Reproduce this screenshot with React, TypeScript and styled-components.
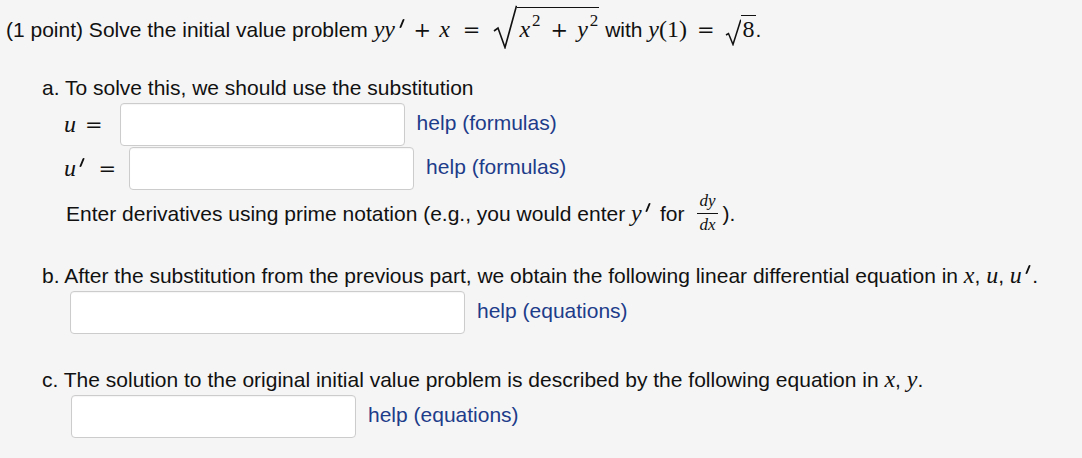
import React from "react";
import styled, { createGlobalStyle } from "styled-components";

const GlobalStyle = createGlobalStyle`
  html, body {
    margin: 0;
    background: #f5f5f5;
  }
  body {
    font-family: "Liberation Sans", Arial, sans-serif;
    font-size: 21px;
    color: #111;
  }
`;

const Page = styled.div`
  width: 1082px;
  height: 458px;
  overflow: hidden;
`;

const Title = styled.div`
  box-sizing: border-box;
  height: 60px;
  padding: 5px 0 0 6px;
  line-height: 30px;
  white-space: nowrap;
`;

const Part = styled.div<{ $top: number }>`
  margin-top: ${(p) => p.$top}px;
  padding-left: 42px;
`;

const Line = styled.div<{ $indent?: number; $top?: number }>`
  line-height: 24px;
  height: 24px;
  margin-top: ${(p) => p.$top ?? 0}px;
  padding-left: ${(p) => p.$indent ?? 0}px;
  white-space: nowrap;
`;

const Row = styled.div<{ $top?: number; $indent?: number }>`
  display: flex;
  align-items: center;
  margin-top: ${(p) => p.$top ?? 0}px;
  padding-left: ${(p) => p.$indent ?? 0}px;
  height: 43px;
`;

const Label = styled.span<{ $after: number }>`
  margin-right: ${(p) => p.$after}px;
  line-height: 30px;
  white-space: nowrap;
`;

const Field = styled.input<{ $w?: number }>`
  box-sizing: border-box;
  width: ${(p) => p.$w ?? 285}px;
  height: 43px;
  background: #fff;
  border: 1px solid #ccc;
  border-radius: 4px;
  box-shadow: inset 0 1px 1px rgba(0, 0, 0, 0.04);
  margin: 0;
  outline: none;
`;

const Help = styled.a`
  color: #1d3c8a;
  text-decoration: none;
  margin-left: 12px;
  margin-top: -4px;
`;

const serif = `"Liberation Serif", "Times New Roman", serif`;

const Mi = styled.span`
  font-family: ${serif};
  font-style: italic;
  font-size: 24px;
`;

const Mn = styled.span`
  font-family: ${serif};
  font-size: 24px;
`;

const Mo = styled.span<{ $l?: number; $r?: number }>`
  font-family: "DejaVu Serif", serif;
  font-size: 21px;
  margin: 0 ${(p) => p.$r ?? 6}px 0 ${(p) => p.$l ?? 6}px;
`;

const Prime = styled.span<{ $l?: number; $r?: number }>`
  display: inline-block;
  width: 1.5px;
  height: 9px;
  background: #111;
  border-radius: 1px;
  transform: skewX(-22deg);
  vertical-align: 9px;
  margin: 0 ${(p) => p.$r ?? 0}px 0 ${(p) => p.$l ?? 6}px;
`;

const Sup = styled.span`
  font-family: ${serif};
  font-size: 17px;
  position: relative;
  top: -11px;
  margin-left: 2px;
`;

const RadicalSign = styled.svg<{ $drop: number }>`
  vertical-align: -${(p) => p.$drop}px;
`;

const RadicalBody = styled.span<{ $pad: number; $r: number }>`
  display: inline-block;
  border-top: 1.5px solid #111;
  padding: ${(p) => p.$pad}px ${(p) => p.$r}px 0 2px;
  line-height: 24px;
`;

const Frac = styled.span`
  display: inline-flex;
  flex-direction: column;
  align-items: center;
  vertical-align: 15px;
  margin: -22px 5px -16px 13px;
  font-family: ${serif};
  font-style: italic;
  font-size: 17px;
  line-height: 16px;
`;

const Num = styled.span`
  border-bottom: 1px solid #111;
  padding: 0 2px 4px;
`;

const Den = styled.span`
  padding: 3px 2px 0;
`;

const Sqrt: React.FC<{ tall?: boolean; children: React.ReactNode }> = ({ tall, children }) =>
  tall ? (
    <>
      <RadicalSign $drop={12} width="24" height="44" viewBox="0 0 24 44">
        <path d="M1 26 L5 23 L12 42.5 L23.5 0.8" fill="none" stroke="#111" strokeWidth="1.6" />
      </RadicalSign>
      <RadicalBody $pad={9} $r={1}>
        {children}
      </RadicalBody>
    </>
  ) : (
    <>
      <RadicalSign $drop={9} width="16" height="27" viewBox="0 0 16 27">
        <path d="M1 16 L3.5 14.5 L8 25.5 L15.8 0.8" fill="none" stroke="#111" strokeWidth="1.5" />
      </RadicalSign>
      <RadicalBody $pad={1} $r={1}>
        {children}
      </RadicalBody>
    </>
  );

export default function App() {
  return (
    <Page>
      <GlobalStyle />
      <Title>
        (1 point) Solve the initial value problem <Mi>yy</Mi>
        <Prime $l={6} />
        <Mo $l={11} $r={8}>+</Mo>
        <Mi>x</Mi>
        <Mo $l={13} $r={13}>=</Mo>
        <Sqrt tall>
          <Mi>x</Mi>
          <Sup>2</Sup>
          <Mo $l={10} $r={9}>+</Mo>
          <Mi>y</Mi>
          <Sup>2</Sup>
        </Sqrt>{" "}
        with <Mi>y</Mi>
        <Mn>(1)</Mn>
        <Mo $l={10} $r={10}>=</Mo>
        <Sqrt>
          <Mn>8</Mn>
        </Sqrt>
        .
      </Title>

      <Part $top={16}>
        <Line>a. To solve this, we should use the substitution</Line>
        <Row $top={3} $indent={22}>
          <Label $after={17}>
            <Mi>u</Mi>
            <Mo $l={9} $r={0}>=</Mo>
          </Label>
          <Field />
          <Help href="#">help (formulas)</Help>
        </Row>
        <Row $top={1} $indent={22}>
          <Label $after={13}>
            <Mi>u</Mi>
            <Prime $l={5} />
            <Mo $l={16} $r={0}>=</Mo>
          </Label>
          <Field />
          <Help href="#">help (formulas)</Help>
        </Row>
        <Line $indent={24} $top={11}>
          Enter derivatives using prime notation (e.g., you would enter <Mi>y</Mi>
          <Prime $l={5} $r={6} /> for
          <Frac>
            <Num>dy</Num>
            <Den>dx</Den>
          </Frac>
          ).
        </Line>
      </Part>

      <Part $top={38}>
        <Line>
          b. After the substitution from the previous part, we obtain the following linear differential
          equation in <Mi>x</Mi>, <Mi>u</Mi>, <Mi>u</Mi>
          <Prime $l={5} $r={4} />.
        </Line>
        <Row $top={4} $indent={28}>
          <Field $w={395} />
          <Help href="#">help (equations)</Help>
        </Row>
      </Part>

      <Part $top={33}>
        <Line>
          c. The solution to the original initial value problem is described by the following equation in{" "}
          <Mi>x</Mi>, <Mi>y</Mi>.
        </Line>
        <Row $top={4} $indent={29}>
          <Field />
          <Help href="#">help (equations)</Help>
        </Row>
      </Part>
    </Page>
  );
}
